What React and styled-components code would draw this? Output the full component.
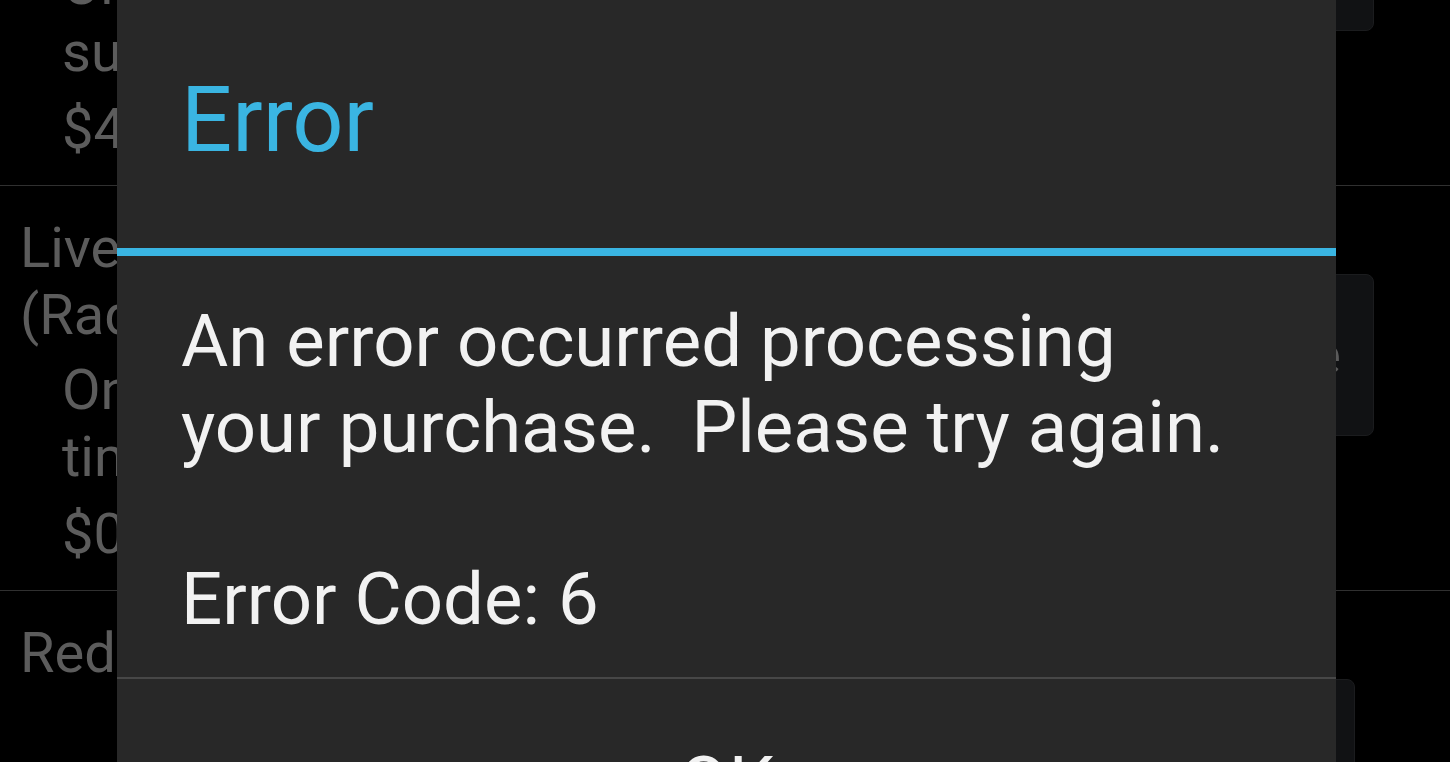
import styled, { createGlobalStyle } from "styled-components";

const GlobalStyle = createGlobalStyle`
  html, body {
    margin: 0;
    padding: 0;
    background: #000;
    overflow: hidden;
  }
  body {
    font-family: Roboto, "Noto Sans", sans-serif;
  }
`;

const Screen = styled.div`
  position: relative;
  width: 1450px;
  height: 762px;
  overflow: hidden;
  background: #000;
`;

/* list behind the dialog, scrolled part-way down */
const List = styled.div`
  margin-top: -219px;
`;

const Item = styled.div`
  display: flex;
  align-items: flex-start;
  padding: 29px 36px 22px 20px;
  border-bottom: 1px solid #303030;
`;

const TextCol = styled.div`
  flex: 1;
  min-width: 0;
  color: #5c5c5c;
  font-size: 56px;
  line-height: 67px;
`;

const Title = styled.div`
  white-space: pre-line;
  margin-bottom: 8px;
`;

const Desc = styled.div`
  margin-left: 42px;
  white-space: pre-line;
`;

const Price = styled.div`
  margin-left: 42px;
  margin-top: 10px;
`;

const ButtonCol = styled.div`
  width: 380px;
  display: flex;
  justify-content: center;
  margin-top: 59px;
`;

const BuyButton = styled.div`
  width: ${(p) => p.$w}px;
  height: 162px;
  box-sizing: border-box;
  display: flex;
  align-items: center;
  justify-content: center;
  background: #111214;
  border: 1px solid #1b1c1e;
  border-radius: 8px;
  color: #5a5a5a;
  font-size: 56px;
`;

/* modal */
const Dialog = styled.div`
  position: absolute;
  left: 117px;
  top: 0;
  width: 1219px;
  height: 900px;
  background: #282828;
  display: flex;
  flex-direction: column;
`;

const DialogTitle = styled.div`
  padding: 68px 64px 74px;
  font-size: 90px;
  line-height: 106px;
  color: #3ab5e2;
  border-bottom: 8px solid #3ab5e2;
`;

const Message = styled.div`
  padding: 43px 64px 34px;
  font-size: 72.5px;
  line-height: 86px;
  color: #f2f2f2;
  white-space: pre-wrap;
  border-bottom: 2px solid #474747;
`;

const OkButton = styled.div`
  padding-top: 61px;
  text-align: center;
  font-size: 73px;
  line-height: 86px;
  color: #f2f2f2;
`;

const products = [
  {
    title: "Live Wallpaper\n(Weather Pack)",
    desc: "One-year\nsubscription",
    price: "$4.99",
    button: "Purchase",
    w: 300,
  },
  {
    title: "Live Wallpaper\n(Radar Pack)",
    desc: "One\ntime purchase",
    price: "$0.99",
    button: "Purchase",
    w: 300,
  },
  {
    title: "Redeem Code",
    desc: "",
    price: "",
    button: "Redeem",
    w: 262,
  },
];

export default function App() {
  return (
    <Screen>
      <GlobalStyle />
      <List>
        {products.map((p) => (
          <Item key={p.title}>
            <TextCol>
              <Title>{p.title}</Title>
              {p.desc && <Desc>{p.desc}</Desc>}
              {p.price && <Price>{p.price}</Price>}
            </TextCol>
            <ButtonCol>
              <BuyButton $w={p.w}>{p.button}</BuyButton>
            </ButtonCol>
          </Item>
        ))}
      </List>

      <Dialog>
        <DialogTitle>Error</DialogTitle>
        <Message>
          {"An error occurred processing\nyour purchase.  Please try again.\n\nError Code: 6"}
        </Message>
        <OkButton>OK</OkButton>
      </Dialog>
    </Screen>
  );
}
